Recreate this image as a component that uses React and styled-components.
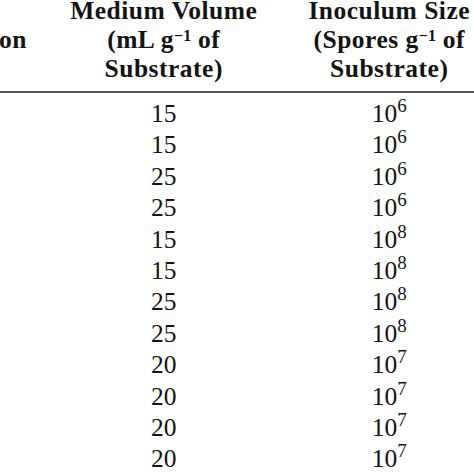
import React from "react";
import styled, { createGlobalStyle } from "styled-components";

const Global = createGlobalStyle`
  html, body { margin: 0; padding: 0; background: #ffffff; }
  body { overflow: hidden; }
`;

const Page = styled.div`
  width: 474px;
  height: 474px;
  overflow: hidden;
  background: #ffffff;
  color: #141414;
  font-family: "Liberation Serif", "Times New Roman", serif;
`;

const Table = styled.div`
  margin-left: -111px;
  margin-top: -4px;
  width: 613px;
  display: flex;
  flex-direction: column;
`;

const Grid = styled.div`
  display: grid;
  grid-template-columns: 162px 225.5px 225.5px;
`;

const HeaderRow = styled(Grid)`
  padding-bottom: 8px;
`;

const HeaderCell = styled.div`
  font-weight: 700;
  font-size: 25.5px;
  line-height: 29px;
  letter-spacing: 0.5px;
  text-align: center;
  white-space: nowrap;
  align-self: center;
`;

const Rule = styled.div`
  height: 2px;
  background: #555555;
`;

const Body = styled.div`
  padding-top: 5px;
  display: flex;
  flex-direction: column;
`;

const Row = styled(Grid)`
  height: 31.4px;
`;

const Cell = styled.div`
  font-size: 25.5px;
  line-height: 31.4px;
  text-align: center;
  white-space: nowrap;
`;

const Sup = styled.sup`
  font-size: ${(p) => (p.$small ? "16px" : "19px")};
  line-height: 0;
  vertical-align: ${(p) => (p.$small ? "7px" : "10px")};
  letter-spacing: 0;
`;

const rows = [
  [15, 6], [15, 6], [25, 6], [25, 6],
  [15, 8], [15, 8], [25, 8], [25, 8],
  [20, 7], [20, 7], [20, 7], [20, 7],
];

export default function App() {
  return (
    <Page>
      <Global />
      <Table>
        <HeaderRow>
          <HeaderCell>Condition</HeaderCell>
          <HeaderCell>
            Medium Volume
            <br />
            (mL g<Sup $small>−1</Sup> of
            <br />
            Substrate)
          </HeaderCell>
          <HeaderCell>
            Inoculum Size
            <br />
            (Spores g<Sup $small>−1</Sup> of
            <br />
            Substrate)
          </HeaderCell>
        </HeaderRow>
        <Rule />
        <Body>
          {rows.map(([vol, exp], i) => (
            <Row key={i}>
              <Cell />
              <Cell>{vol}</Cell>
              <Cell>
                10<Sup>{exp}</Sup>
              </Cell>
            </Row>
          ))}
        </Body>
      </Table>
    </Page>
  );
}
